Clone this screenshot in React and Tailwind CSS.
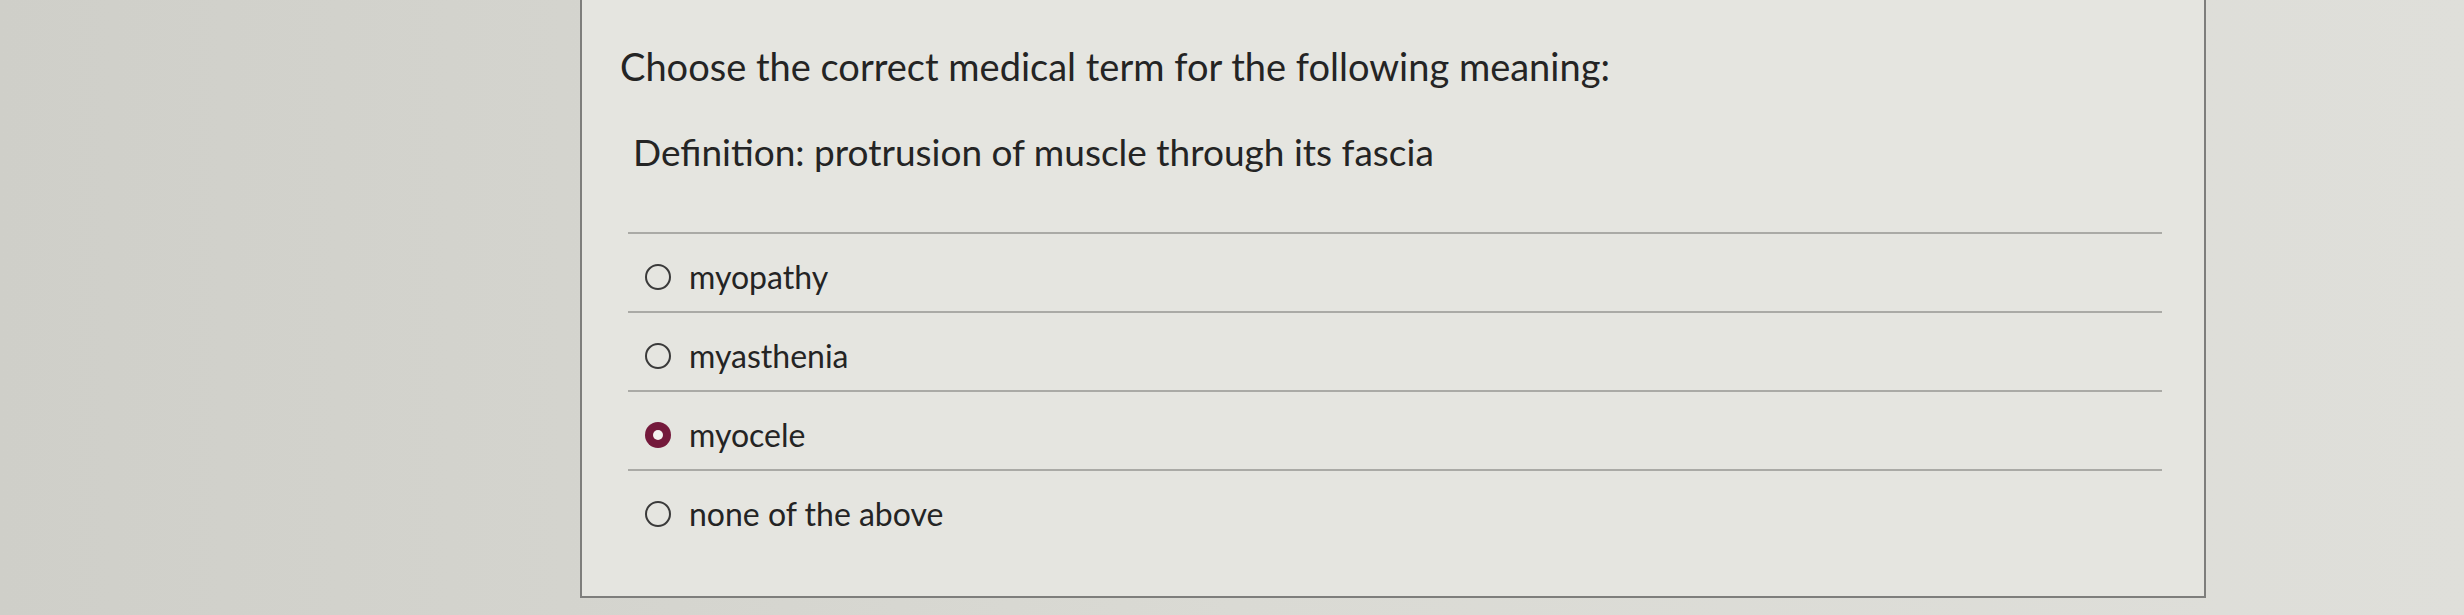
import React, { useState } from 'react';

const OPTIONS = ['myopathy', 'myasthenia', 'myocele', 'none of the above'];

function Radio({ checked }) {
  return checked ? (
    <span className="w-[26px] h-[26px] rounded-full bg-[#74193b] flex items-center justify-center shrink-0">
      <span className="w-[10px] h-[10px] rounded-full bg-[#f4f2f0]" />
    </span>
  ) : (
    <span className="w-[26px] h-[26px] rounded-full border-[2.5px] border-[#3a3a3a] shrink-0" />
  );
}

export default function App() {
  const [answer, setAnswer] = useState('myocele');

  return (
    <div
      className="w-[2464px] h-[615px] overflow-hidden bg-linear-to-r from-[#cfcfc9] via-[#dadad4] to-[#dfdfda] text-[#242424]"
      style={{ fontFamily: 'Lato, "Open Sans", sans-serif' }}
    >
      <div className="ml-[580px] w-[1626px] h-[598px] bg-[#e5e5e0] border-x-2 border-b-2 border-[#7e7e7c] pl-[38px] pr-[42px] pt-[44px]">
        <h2 className="text-[38px] leading-[1.2] font-normal">
          Choose the correct medical term for the following meaning:
        </h2>
        <p className="mt-[40px] ml-[13px] text-[37px] leading-[1.2]">
          Definition: protrusion of muscle through its fascia
        </p>

        <div className="mt-[58px] ml-[8px]">
          {OPTIONS.map((opt) => (
            <label
              key={opt}
              onClick={() => setAnswer(opt)}
              className="h-[79px] border-t-2 border-[#aaaaa6] flex items-start gap-[18px] pl-[17px] pt-[30px] cursor-pointer"
            >
              <Radio checked={answer === opt} />
              <span className="text-[32px] leading-[26px]">{opt}</span>
            </label>
          ))}
        </div>
      </div>
    </div>
  );
}
